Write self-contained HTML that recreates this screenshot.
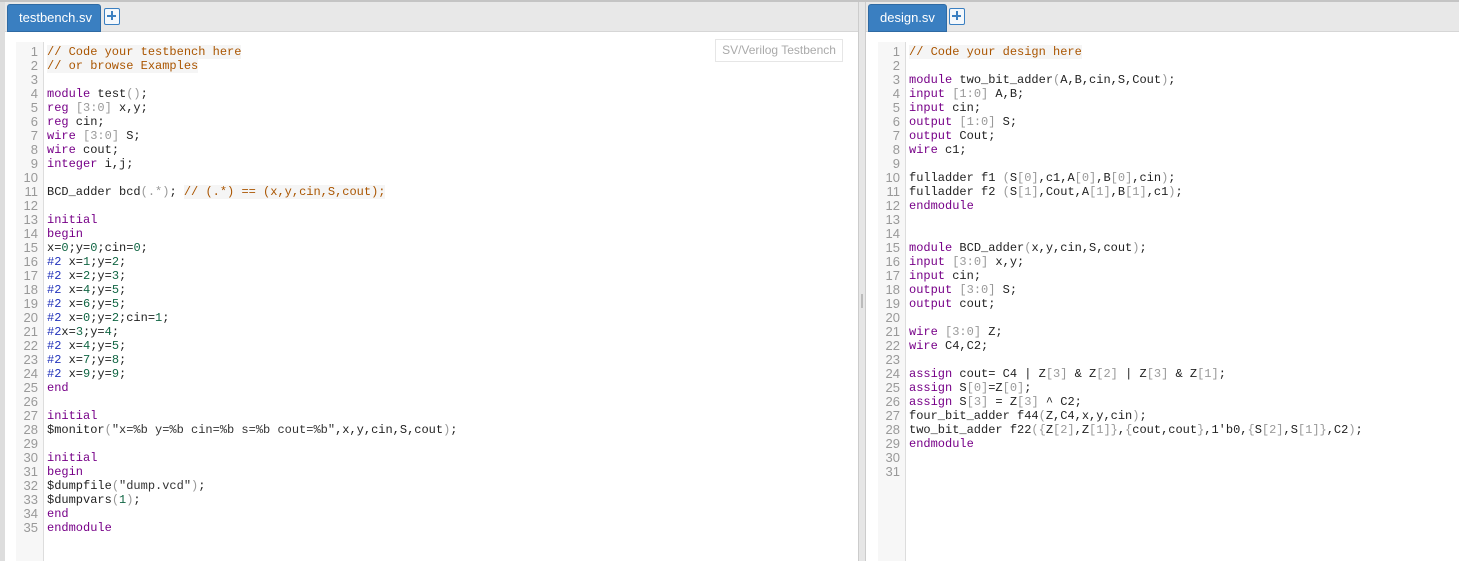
<!DOCTYPE html>
<html><head><meta charset="utf-8"><style>
*{margin:0;padding:0;box-sizing:border-box}
body{width:1459px;height:561px;background:#fff;position:relative;overflow:hidden;font-family:"Liberation Sans",sans-serif}
.top{position:absolute;left:0;top:0;width:1459px;height:2px;background:#c4c4c4}
.pane{position:absolute;top:2px;bottom:0;background:#fff}
.bar{position:absolute;left:0;right:0;top:0;height:30px;background:#e8e8e8;border-bottom:1px solid #d6d6d6}
.tab{position:absolute;top:2px;height:28px;background:#3a7fc1;color:#fff;font-size:13px;line-height:26px;padding-left:11px;border-radius:3px 3px 0 0;border:1px solid #2f6aa3}
.plus{position:absolute;top:6px;width:16px;height:17px;border:1.5px solid #3a7fc1;border-radius:2px;background:#f4f8fc}
.plus:before{content:"";position:absolute;left:2px;top:6px;width:9px;height:1.5px;background:#3a7fc1}
.plus:after{content:"";position:absolute;left:6px;top:2px;width:1.5px;height:9px;background:#3a7fc1}
.gut{position:absolute;top:40px;bottom:0;width:28px;background:#f7f7f7;border-right:1px solid #ddd}
.nums{position:absolute;top:43px;font-family:"Liberation Sans",sans-serif;font-size:13px;line-height:14px;color:#999;text-align:right;width:22px}
.code{position:absolute;top:43px;font-family:"Liberation Mono",monospace;font-size:12px;line-height:14px;color:#222;white-space:pre}
.k{color:#770088}.c{color:#aa5500;background:#f5f5f5}.p{color:#999}.n{color:#164}.h{color:#2233bb}.s{color:#333}
.lbl{position:absolute;left:710px;top:37px;width:128px;height:23px;border:1px solid #e6e6e6;color:#aaa;font-size:12px;line-height:21px;text-align:center}
.split{position:absolute;left:858px;top:2px;width:8px;bottom:0;background:#e6e6e6;border-left:1px solid #ccc;border-right:1px solid #ccc}
.grip{position:absolute;left:861px;top:294px;width:2px;height:14px;border-left:1px solid #bbb;border-right:1px solid #bbb}
</style></head><body>
<div class="top"></div>
<div class="pane" style="left:0;width:858px;border-left:5px solid #ddd">
 <div class="bar"></div>
 <div class="tab" style="left:2px;width:94px">testbench.sv</div>
 <div class="plus" style="left:99px"></div>
 <div class="gut" style="left:11px"></div>
 <div class="nums" style="left:11px">1<br>2<br>3<br>4<br>5<br>6<br>7<br>8<br>9<br>10<br>11<br>12<br>13<br>14<br>15<br>16<br>17<br>18<br>19<br>20<br>21<br>22<br>23<br>24<br>25<br>26<br>27<br>28<br>29<br>30<br>31<br>32<br>33<br>34<br>35</div>
 <div class="code" style="left:42px"><span class="c">// Code your testbench here</span>
<span class="c">// or browse Examples</span>

<span class="k">module</span> test<span class="p">()</span>;
<span class="k">reg</span> <span class="p">[3:0]</span> x,y;
<span class="k">reg</span> cin;
<span class="k">wire</span> <span class="p">[3:0]</span> S;
<span class="k">wire</span> cout;
<span class="k">integer</span> i,j;

BCD_adder bcd<span class="p">(.*)</span>; <span class="c">// (.*) == (x,y,cin,S,cout);</span>

<span class="k">initial</span>
<span class="k">begin</span>
x=<span class="n">0</span>;y=<span class="n">0</span>;cin=<span class="n">0</span>;
<span class="h">#2</span> x=<span class="n">1</span>;y=<span class="n">2</span>;
<span class="h">#2</span> x=<span class="n">2</span>;y=<span class="n">3</span>;
<span class="h">#2</span> x=<span class="n">4</span>;y=<span class="n">5</span>;
<span class="h">#2</span> x=<span class="n">6</span>;y=<span class="n">5</span>;
<span class="h">#2</span> x=<span class="n">0</span>;y=<span class="n">2</span>;cin=<span class="n">1</span>;
<span class="h">#2</span>x=<span class="n">3</span>;y=<span class="n">4</span>;
<span class="h">#2</span> x=<span class="n">4</span>;y=<span class="n">5</span>;
<span class="h">#2</span> x=<span class="n">7</span>;y=<span class="n">8</span>;
<span class="h">#2</span> x=<span class="n">9</span>;y=<span class="n">9</span>;
<span class="k">end</span>

<span class="k">initial</span>
$monitor<span class="p">(</span><span class="s">"x=%b y=%b cin=%b s=%b cout=%b"</span>,x,y,cin,S,cout<span class="p">)</span>;

<span class="k">initial</span>
<span class="k">begin</span>
$dumpfile<span class="p">(</span><span class="s">"dump.vcd"</span><span class="p">)</span>;
$dumpvars<span class="p">(</span><span class="n">1</span><span class="p">)</span>;
<span class="k">end</span>
<span class="k">endmodule</span></div>
 <div class="lbl">SV/Verilog Testbench</div>
</div>
<div class="split"></div>
<div class="grip"></div>
<div class="pane" style="left:866px;width:593px">
 <div class="bar"></div>
 <div class="tab" style="left:2px;width:79px">design.sv</div>
 <div class="plus" style="left:83px"></div>
 <div class="gut" style="left:12px"></div>
 <div class="nums" style="left:12px">1<br>2<br>3<br>4<br>5<br>6<br>7<br>8<br>9<br>10<br>11<br>12<br>13<br>14<br>15<br>16<br>17<br>18<br>19<br>20<br>21<br>22<br>23<br>24<br>25<br>26<br>27<br>28<br>29<br>30<br>31</div>
 <div class="code" style="left:43px"><span class="c">// Code your design here</span>

<span class="k">module</span> two_bit_adder<span class="p">(</span>A,B,cin,S,Cout<span class="p">)</span>;
<span class="k">input</span> <span class="p">[1:0]</span> A,B;
<span class="k">input</span> cin;
<span class="k">output</span> <span class="p">[1:0]</span> S;
<span class="k">output</span> Cout;
<span class="k">wire</span> c1;

fulladder f1 <span class="p">(</span>S<span class="p">[0]</span>,c1,A<span class="p">[0]</span>,B<span class="p">[0]</span>,cin<span class="p">)</span>;
fulladder f2 <span class="p">(</span>S<span class="p">[1]</span>,Cout,A<span class="p">[1]</span>,B<span class="p">[1]</span>,c1<span class="p">)</span>;
<span class="k">endmodule</span>


<span class="k">module</span> BCD_adder<span class="p">(</span>x,y,cin,S,cout<span class="p">)</span>;
<span class="k">input</span> <span class="p">[3:0]</span> x,y;
<span class="k">input</span> cin;
<span class="k">output</span> <span class="p">[3:0]</span> S;
<span class="k">output</span> cout;

<span class="k">wire</span> <span class="p">[3:0]</span> Z;
<span class="k">wire</span> C4,C2;

<span class="k">assign</span> cout= C4 | Z<span class="p">[3]</span> &amp; Z<span class="p">[2]</span> | Z<span class="p">[3]</span> &amp; Z<span class="p">[1]</span>;
<span class="k">assign</span> S<span class="p">[0]</span>=Z<span class="p">[0]</span>;
<span class="k">assign</span> S<span class="p">[3]</span> = Z<span class="p">[3]</span> ^ C2;
four_bit_adder f44<span class="p">(</span>Z,C4,x,y,cin<span class="p">)</span>;
two_bit_adder f22<span class="p">({</span>Z<span class="p">[2]</span>,Z<span class="p">[1]}</span>,<span class="p">{</span>cout,cout<span class="p">}</span>,1'b0,<span class="p">{</span>S<span class="p">[2]</span>,S<span class="p">[1]}</span>,C2<span class="p">)</span>;
<span class="k">endmodule</span></div>
</div>
</body></html>
